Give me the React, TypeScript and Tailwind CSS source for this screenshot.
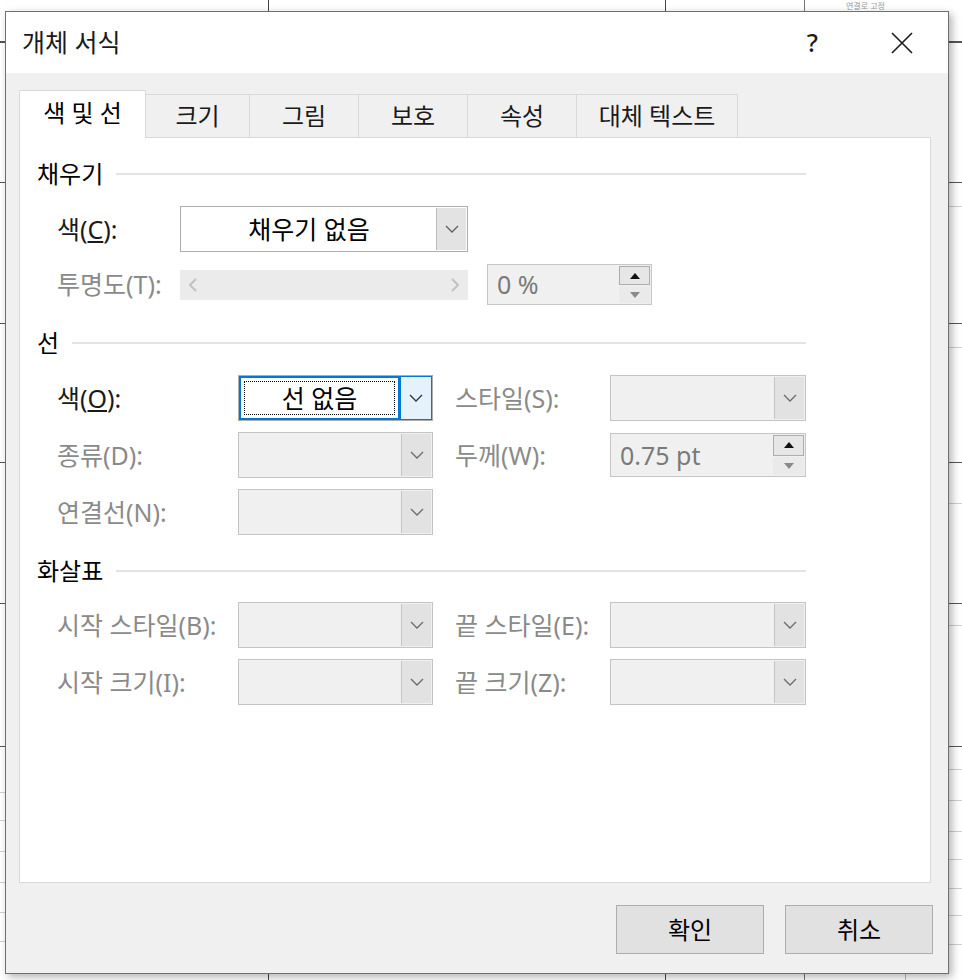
import type { ReactNode } from 'react'

const Chevron = ({ color = '#5f5f5f' }: { color?: string }) => (
  <svg width="14" height="8" viewBox="0 0 14 8">
    <path d="M1 1l6 6 6-6" fill="none" stroke={color} strokeWidth="1.3" />
  </svg>
)

const Label = ({ children, disabled, className = '' }: { children: ReactNode; disabled?: boolean; className?: string }) => (
  <span
    className={[
      'shrink-0 text-[25px] leading-none whitespace-nowrap',
      disabled ? 'text-[#8a8a8a]' : 'text-[#1a1a1a]',
      className,
    ].join(' ')}
  >
    {children}
  </span>
)

const Header = ({ title }: { title: string }) => (
  <div className="flex h-[30px] w-[769px] items-center">
    <span className="text-[24px] leading-none text-black">{title}</span>
    <div className="ml-[13px] h-[2px] flex-1 bg-[#e3e3e3]" />
  </div>
)

// 비활성 콤보박스
const DisabledCombo = ({ className }: { className: string }) => (
  <div className={['flex h-[46px] border border-[#c4c4c4] bg-[#f0f0f0] p-px', className].join(' ')}>
    <div className="flex-1" />
    <div className="flex w-[30px] items-center justify-center border-l border-[#c4c4c4] bg-[#e2e2e2]">
      <Chevron color="#6a6a6a" />
    </div>
  </div>
)

const Spin = ({ value, className }: { value: string; className: string }) => (
  <div className={['flex border border-[#c6c6c6] bg-[#f0f0f0] p-px', className].join(' ')}>
    <div className="flex flex-1 items-center pl-[8px] text-[25px] leading-none text-[#7a7a7a]">{value}</div>
    <div className="flex w-[31px] flex-col gap-px">
      <div className="flex flex-1 items-center justify-center border border-[#adadad] bg-[#e6e6e6]">
        <svg width="10" height="6" viewBox="0 0 10 6">
          <path d="M0 6L5 0l5 6z" fill="#111" />
        </svg>
      </div>
      <div className="flex flex-1 items-center justify-center bg-[#eaeaea]">
        <svg width="10" height="6" viewBox="0 0 10 6">
          <path d="M0 0h10L5 6z" fill="#8a8a8a" />
        </svg>
      </div>
    </div>
  </div>
)

const Sheet = () => (
  <div className="absolute inset-0 z-0">
    <div className="absolute left-[268px] top-0 h-full w-px bg-[#444]" />
    <div className="absolute left-[665px] top-0 h-full w-px bg-[#444]" />
    <div className="absolute left-[804px] top-0 h-full w-px bg-[#777]" />
    <div className="absolute left-[905px] top-[960px] h-[20px] w-px bg-[#bbb]" />
    <div className="absolute left-0 top-[41px] h-[2px] w-full bg-[#555]" />
    {[182, 323, 462, 603, 746].map((y) => (
      <div key={y} className="absolute left-0 h-px w-full bg-[#555]" style={{ top: y }} />
    ))}
    {[206, 347, 503, 625, 769, 800, 831, 859, 888, 915, 944].map((y) => (
      <div key={'r' + y} className="absolute left-[940px] h-px w-[30px] bg-[#cfcfcf]" style={{ top: y }} />
    ))}
    {[792, 820, 851, 882, 912, 941].map((y) => (
      <div key={'l' + y} className="absolute left-0 h-px w-[10px] bg-[#cfcfcf]" style={{ top: y }} />
    ))}
    <span className="absolute left-[846px] top-[1px] text-[8px] leading-[9px] text-[#9a9a9a]">연결로 고정</span>
  </div>
)

const tabs = [
  { label: '크기', w: 'w-[104px]' },
  { label: '그림', w: 'w-[109px]' },
  { label: '보호', w: 'w-[109px]' },
  { label: '속성', w: 'w-[109px]' },
  { label: '대체 텍스트', w: 'w-[161px]' },
]

export default function App() {
  return (
    <div className="relative h-[980px] w-[962px] overflow-hidden bg-white font-['Noto_Sans','Noto_Sans_CJK_KR',sans-serif]">
      <Sheet />
      <div className="relative z-10 pl-[5px] pt-[11px]">
        <div className="flex h-[963px] w-[944px] flex-col border border-[#6f6f6f] bg-[#f0f0f0] shadow-[3px_3px_8px_rgba(0,0,0,0.3)]">
          {/* 타이틀 바 */}
          <div className="flex h-[61px] shrink-0 items-center bg-white pl-[16px]">
            <span className="text-[25px] leading-none text-[#1a1a1a]">개체 서식</span>
            <span className="ml-auto text-[25px] font-medium leading-none text-[#1a1a1a]">?</span>
            <div className="ml-[72px] mr-[34px] flex h-[24px] w-[24px] items-center justify-center">
              <svg width="22" height="22" viewBox="0 0 22 22">
                <path d="M1 1l20 20M21 1L1 21" stroke="#1a1a1a" strokeWidth="1.6" />
              </svg>
            </div>
          </div>

          <div className="flex flex-1 flex-col pl-[13px] pr-[17px] pt-[17px]">
            {/* 탭 */}
            <div className="flex h-[48px] items-end">
              <div className="flex h-[48px] w-[127px] items-center justify-center border-x border-t border-[#d9d9d9] bg-white pb-[4px] text-[24px] leading-none text-black">
                색 및 선
              </div>
              {tabs.map((t) => (
                <div
                  key={t.label}
                  className={[
                    'flex h-[44px] items-center justify-center border-y border-r border-[#d9d9d9] bg-[#f0f0f0] text-[24px] leading-none text-[#1a1a1a]',
                    t.w,
                  ].join(' ')}
                >
                  {t.label}
                </div>
              ))}
              <div className="h-px flex-1 bg-[#d9d9d9]" />
            </div>

            {/* 패널 */}
            <div className="h-[745px] border-x border-b border-[#d9d9d9] bg-white pl-[17px] pt-[21px]">
              <Header title="채우기" />
              <div className="pl-[20px]">
                <div className="mt-[17px] flex h-[46px] items-center">
                  <Label className="w-[123px]">
                    색(<span className="underline underline-offset-2">C</span>):
                  </Label>
                  <div className="flex h-[46px] w-[288px] border border-[#adadad] bg-white p-px">
                    <div className="flex flex-1 items-center justify-center text-[25px] leading-none text-black">
                      채우기 없음
                    </div>
                    <div className="flex w-[30px] items-center justify-center border-l border-[#bcbcbc] bg-[#e3e3e3]">
                      <Chevron />
                    </div>
                  </div>
                </div>
                <div className="mt-[12px] flex h-[41px] items-center">
                  <Label disabled className="w-[123px]">
                    투명도(T):
                  </Label>
                  <div className="flex h-[30px] w-[288px] items-center justify-between bg-[#ebebeb] px-[8px]">
                    <svg width="10" height="16" viewBox="0 0 10 16">
                      <path d="M8 2L2 8l6 6" fill="none" stroke="#c2c2c2" strokeWidth="2" />
                    </svg>
                    <svg width="10" height="16" viewBox="0 0 10 16">
                      <path d="M2 2l6 6-6 6" fill="none" stroke="#c2c2c2" strokeWidth="2" />
                    </svg>
                  </div>
                  <Spin value="0 %" className="ml-[19px] h-[41px] w-[165px]" />
                </div>
              </div>

              <div className="mt-[23px]">
                <Header title="선" />
              </div>
              <div className="mt-[17px] flex flex-col gap-[11px] pl-[20px]">
                <div className="flex h-[46px] items-center">
                  <Label className="w-[181px]">
                    색(<span className="underline underline-offset-2">O</span>):
                  </Label>
                  <div className="flex h-[46px] w-[195px] border border-[#adadad] bg-white">
                    <div className="flex flex-1 border-2 border-[#0078d7] bg-white p-[3px]">
                      <div className="flex flex-1 items-center justify-center border border-dotted border-black text-[25px] leading-none text-black">
                        선 없음
                      </div>
                    </div>
                    <div className="flex w-[32px] items-center justify-center border border-[#0078d7] bg-[#e5f1fb]">
                      <Chevron color="#333" />
                    </div>
                  </div>
                  <Label disabled className="ml-[22px] w-[155px]">
                    스타일(S):
                  </Label>
                  <DisabledCombo className="w-[196px]" />
                </div>
                <div className="flex h-[46px] items-center">
                  <Label disabled className="w-[181px]">
                    종류(D):
                  </Label>
                  <DisabledCombo className="w-[195px]" />
                  <Label disabled className="ml-[22px] w-[155px]">
                    두께(W):
                  </Label>
                  <Spin value="0.75 pt" className="h-[44px] w-[196px]" />
                </div>
                <div className="flex h-[46px] items-center">
                  <Label disabled className="w-[181px]">
                    연결선(N):
                  </Label>
                  <DisabledCombo className="w-[195px]" />
                </div>
              </div>

              <div className="mt-[21px]">
                <Header title="화살표" />
              </div>
              <div className="mt-[16px] flex flex-col gap-[11px] pl-[20px]">
                <div className="flex h-[46px] items-center">
                  <Label disabled className="w-[181px]">
                    시작 스타일(B):
                  </Label>
                  <DisabledCombo className="w-[195px]" />
                  <Label disabled className="ml-[22px] w-[155px]">
                    끝 스타일(E):
                  </Label>
                  <DisabledCombo className="w-[196px]" />
                </div>
                <div className="flex h-[46px] items-center">
                  <Label disabled className="w-[181px]">
                    시작 크기(I):
                  </Label>
                  <DisabledCombo className="w-[195px]" />
                  <Label disabled className="ml-[22px] w-[155px]">
                    끝 크기(Z):
                  </Label>
                  <DisabledCombo className="w-[196px]" />
                </div>
              </div>
            </div>

            {/* 버튼 */}
            <div className="-mr-[2px] mt-[22px] flex justify-end gap-[21px]">
              <button className="flex h-[49px] w-[148px] items-center justify-center border border-[#adadad] bg-[#e1e1e1] text-[24px] leading-none text-black">
                확인
              </button>
              <button className="flex h-[49px] w-[148px] items-center justify-center border border-[#adadad] bg-[#e1e1e1] text-[24px] leading-none text-black">
                취소
              </button>
            </div>
          </div>
        </div>
      </div>
    </div>
  )
}
